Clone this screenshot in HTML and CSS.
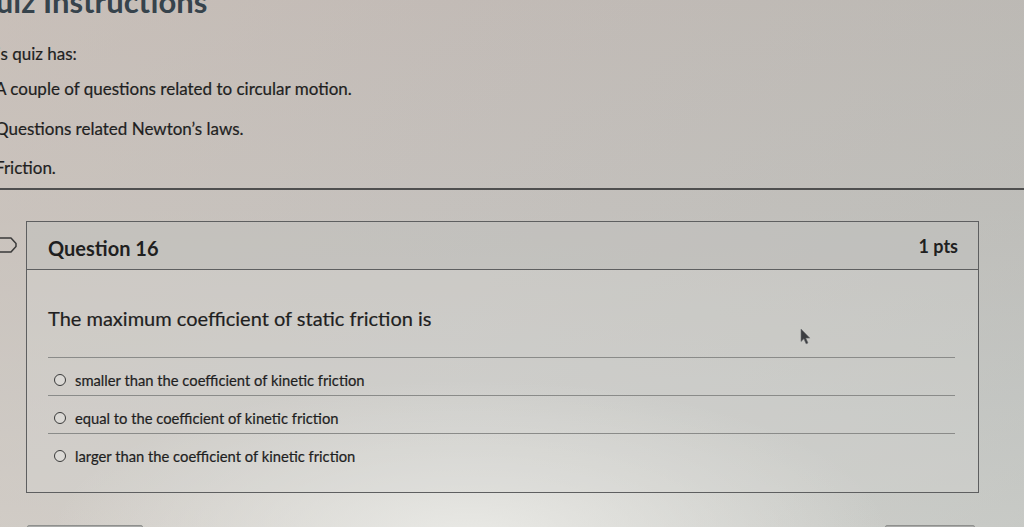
FILE: index.html
```html
<!DOCTYPE html>
<html>
<head>
<meta charset="utf-8">
<link rel="stylesheet" href="styles.css">
</head>
<body>
<div class="page">
  <div class="instructions">
    <h2 class="title">Quiz Instructions</h2>
    <p class="intro">This quiz has:</p>
    <ul class="topics">
      <li>A couple of questions related to circular motion.</li>
      <li>Questions related Newton’s laws.</li>
      <li>Friction.</li>
    </ul>
  </div>
  <hr class="divider">
  <div class="question-row">
    <div class="flag-col">
      <svg class="flag" width="18" height="18" viewBox="0 0 18 18"><path d="M-2 1 H11 L16 6.5 V9.5 L11 15 H-2" fill="none" stroke="#3a3a3a" stroke-width="1.5" stroke-linejoin="round"/></svg>
    </div>
    <div class="question">
      <div class="q-header">
        <span class="q-name">Question 16</span>
        <span class="q-pts">1 pts</span>
      </div>
      <div class="q-body">
        <p class="q-text">The maximum coefficient of static friction is</p>
        <div class="answers">
          <label class="answer"><span class="radio"></span>smaller than the coefficient of kinetic friction</label>
          <label class="answer"><span class="radio"></span>equal to the coefficient of kinetic friction</label>
          <label class="answer"><span class="radio"></span>larger than the coefficient of kinetic friction</label>
        </div>
      </div>
    </div>
  </div>
  <div class="footer">
    <span class="btn btn-left"></span>
    <span class="btn btn-right"></span>
  </div>
  <svg class="cursor" width="12" height="18" viewBox="0 0 12 18"><path d="M1 1 L1 13.5 L3.9 10.8 L6.1 15.8 L8 15 L5.8 10.1 L9.8 10.1 Z" fill="#3b3d40" stroke="#6a6c6e" stroke-width="0.6"/></svg>
</div>
</body>
</html>
```
FILE: styles.css
```css
html, body {
  margin: 0;
  padding: 0;
  height: 100%;
  overflow: hidden;
}
body {
  font-family: Lato, "Open Sans", "Liberation Sans", sans-serif;
  color: #1f1f1f;
  -webkit-text-stroke: 0.2px #1f1f1f;
  background:
    radial-gradient(ellipse 420px 160px at 470px 540px, rgba(236,236,232,0.9) 0%, rgba(236,236,232,0) 100%),
    linear-gradient(90deg, rgba(205,194,186,0.5) 0%, rgba(188,180,176,0.15) 45%, rgba(176,180,176,0.35) 100%),
    linear-gradient(180deg, #c3bcb7 0%, #c6c3bf 40%, #cdcecb 75%, #d4d5d1 100%);
}
.page {
  position: relative;
  display: flow-root;
  width: 1024px;
  height: 527px;
}
.instructions {
  margin-left: -20px;
}
.title {
  margin: -16px 0 0 -9px;
  font-size: 31px;
  font-weight: 700;
  color: #36434c;
  -webkit-text-stroke: 0;
  line-height: 34px;
}
.intro {
  margin: 25px 0 0 -3px;
  font-size: 17px;
  line-height: 22px;
}
.topics {
  list-style: none;
  margin: 13px 0 0 0;
  padding: 0 0 0 15px;
  font-size: 17px;
  line-height: 22px;
}
.topics li {
  margin-bottom: 17.5px;
}
.divider {
  margin: -9px 0 0 0;
  border: 0;
  border-top: 2px solid #4f4f4f;
  height: 0;
}
.question-row {
  display: flex;
  margin-top: 31px;
}
.flag-col {
  width: 26px;
  flex: none;
}
.flag {
  display: block;
  margin-top: 16px;
}
.question {
  width: 951px;
  border: 1px solid #5e5f60;
  background: rgba(214,215,212,0.3);
}
.q-header {
  display: flex;
  justify-content: space-between;
  align-items: flex-start;
  height: 47px;
  padding: 0 20px 0 21px;
  border-bottom: 1px solid #5e5f60;
  background: rgba(180,181,178,0.35);
}
.q-name {
  font-size: 20px;
  font-weight: 700;
  line-height: 24px;
  margin-top: 14px;
  -webkit-text-stroke: 0;
}
.q-pts {
  font-size: 18px;
  font-weight: 700;
  line-height: 22px;
  margin-top: 13px;
  -webkit-text-stroke: 0;
}
.q-body {
  padding: 35px 23px 21px 21px;
}
.q-text {
  margin: 0 0 26px 0;
  font-size: 20px;
  line-height: 26px;
}
.answers {
  display: flex;
  flex-direction: column;
}
.answer {
  display: flex;
  align-items: flex-start;
  gap: 9px;
  box-sizing: content-box;
  height: 24px;
  padding: 13px 0 0 6px;
  border-top: 1px solid #8a8b89;
  font-size: 14.75px;
  line-height: 18px;
}
.radio {
  width: 10px;
  height: 10px;
  border: 1.5px solid #3a3a3a;
  border-radius: 50%;
  margin-top: 3px;
  background: rgba(235,235,232,0.4);
}
.footer {
  display: flex;
  justify-content: space-between;
  margin: 32px 49px 0 27px;
}
.btn {
  display: block;
  height: 12px;
  border: 1px solid #8f908e;
  border-radius: 2px;
  background: #a9aaa8;
}
.btn-left { width: 114px; }
.btn-right { width: 88px; }
.cursor {
  position: absolute;
  left: 800px;
  top: 328px;
}
```
